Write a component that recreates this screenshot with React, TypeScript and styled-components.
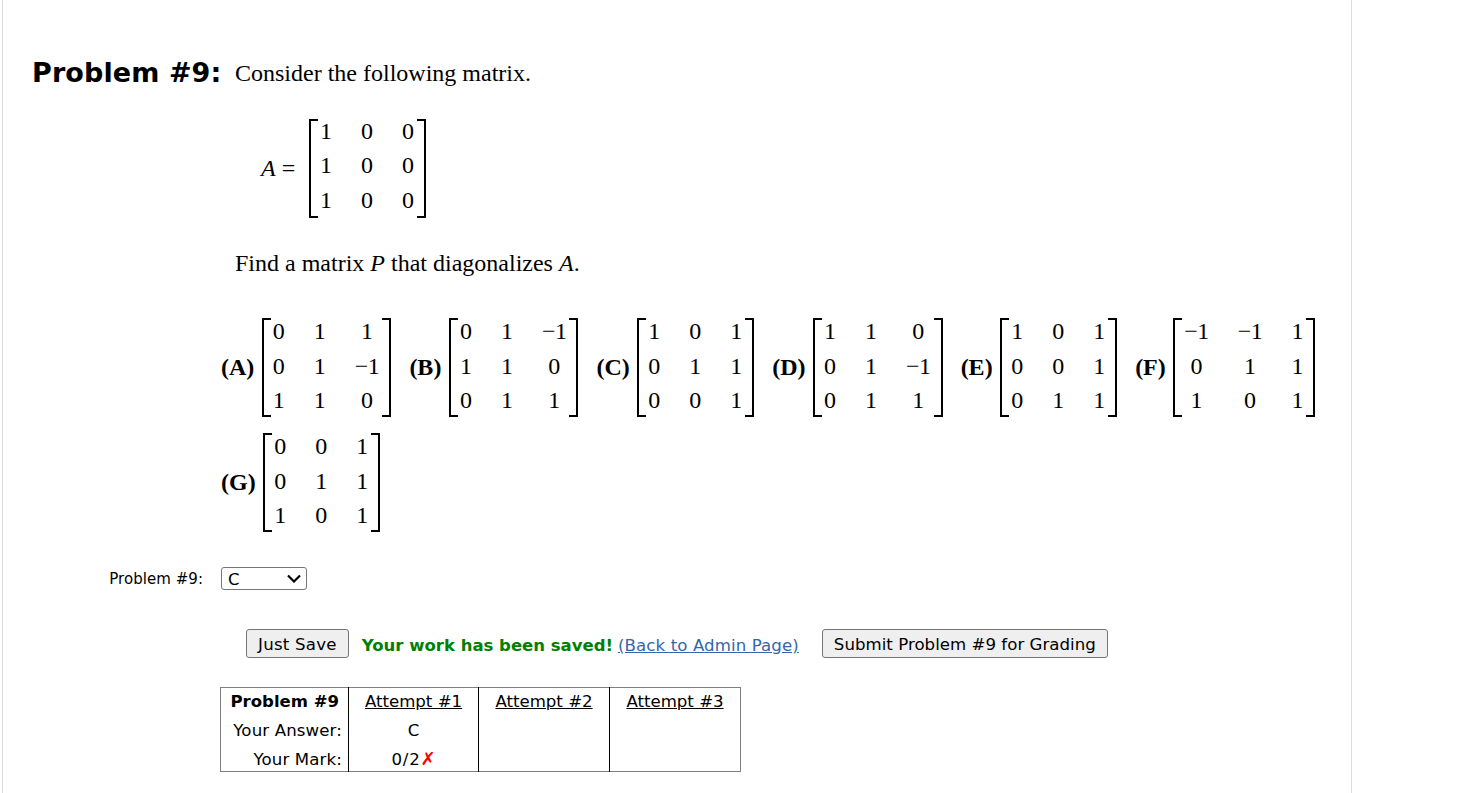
import React from "react";
import styled, { createGlobalStyle } from "styled-components";

const Global = createGlobalStyle`
  html, body { margin: 0; padding: 0; background: #fff; }
  body { font-family: "DejaVu Sans", Verdana, sans-serif; color: #000; overflow: hidden; }
`;

const Frame = styled.main`
  box-sizing: border-box;
  width: 1350px;
  height: 793px;
  margin-left: 2px;
  padding: 54px 0 0 30px;
  border-left: 1px solid #ddd;
  border-right: 1px solid #ddd;
  overflow: hidden;
`;

const HeadingRow = styled.div`
  display: flex;
  align-items: center;
`;

const Title = styled.h1`
  width: 203px;
  margin: 0 0 0 -1px;
  font-size: 27px;
  letter-spacing: 0.1px;
  line-height: 38px;
  font-weight: 700;
  white-space: nowrap;
`;

const Body = styled.section`
  margin-left: 188px;
  font-family: "Liberation Serif", "Times New Roman", serif;
  font-size: 24px;
`;

const Para = styled.p`
  margin: 0;
  font-family: "Liberation Serif", "Times New Roman", serif;
  font-size: 24px;
  line-height: 28px;
  white-space: nowrap;
`;

const Prompt = styled(Para)`
  margin: 31px 0 0 14px;
`;

const Equation = styled.div`
  display: flex;
  align-items: center;
  margin: 27px 0 0 40px;
`;

const Lhs = styled.span`
  width: 48px;
  white-space: nowrap;
`;

const Var = styled.i`
  font-style: italic;
`;

const Choices = styled.div`
  display: flex;
  flex-wrap: wrap;
  gap: 16px 18px;
  margin-top: 41px;
`;

const Choice = styled.div`
  display: flex;
  align-items: center;
  gap: 7.5px;
`;

const ChoiceLabel = styled.b`
  font-weight: 700;
  white-space: nowrap;
`;

const MatrixBox = styled.div`
  display: flex;
  align-items: stretch;
  height: 99px;
`;

const Bracket = styled.span<{ $side: "left" | "right" }>`
  box-sizing: border-box;
  width: 9px;
  border: 2px solid #000;
  border-${(p) => (p.$side === "left" ? "right" : "left")}: 0;
`;

const Cells = styled.div<{ $top: number }>`
  display: grid;
  grid-template-columns: repeat(3, auto);
  grid-auto-rows: 24px;
  column-gap: 29px;
  row-gap: 10.5px;
  margin-top: ${(p) => p.$top}px;
  padding: 0 3px 0 2px;
  line-height: 24px;
  text-align: center;
`;

const Cell = styled.span<{ $neg: boolean }>`
  white-space: nowrap;
  letter-spacing: ${(p) => (p.$neg ? "-0.5px" : "0")};
`;

const AnswerRow = styled.div`
  display: flex;
  align-items: center;
  margin-top: 35px;
`;

const AnswerLabel = styled.label`
  width: 170px;
  margin-right: 18px;
  font-size: 15px;
  letter-spacing: 0.05px;
  text-align: right;
  white-space: nowrap;
`;

const SelectWrap = styled.div`
  position: relative;
  width: 86px;
  height: 23px;
`;

const AnswerSelect = styled.select`
  appearance: none;
  box-sizing: border-box;
  width: 100%;
  height: 100%;
  padding: 1px 6px 0;
  font-family: "DejaVu Sans", Verdana, sans-serif;
  font-size: 16.6px;
  color: #000;
  background: #fff;
  border: 1px solid #767676;
  border-radius: 3px;
`;

const Chevron = styled.svg`
  position: absolute;
  top: 7px;
  right: 6px;
  width: 14px;
  height: 9px;
  pointer-events: none;
`;

const Actions = styled.div`
  display: flex;
  align-items: center;
  margin: 39px 0 0 213px;
  font-size: 16.6px;
  white-space: nowrap;
`;

const Button = styled.button<{ $track: number }>`
  box-sizing: border-box;
  height: 29px;
  padding: 2px 11px 0;
  font-family: "DejaVu Sans", Verdana, sans-serif;
  font-size: 16.6px;
  letter-spacing: ${(p) => p.$track}px;
  color: #000;
  background: #efefef;
  border: 1px solid #767676;
  border-radius: 3px;
  white-space: nowrap;
`;

const Saved = styled.b`
  margin-left: 13px;
  padding-top: 3px;
  color: #008000;
  font-size: 16.5px;
  font-weight: 700;
`;

const BackLink = styled.a`
  margin: 0 23px 0 5px;
  padding-top: 3px;
  color: #3366aa;
  letter-spacing: 0.1px;
  text-decoration: underline;
`;

const Attempts = styled.table`
  width: 521px;
  height: 85px;
  margin: 29px 0 0 187px;
  border-collapse: collapse;
  border: 1px solid #808080;
  font-size: 16.6px;
  table-layout: fixed;
  white-space: nowrap;
`;

const Row = styled.tr<{ $shift: number }>`
  height: 28px;
  && > * {
    padding-top: ${(p) => p.$shift}px;
  }
`;

const Th = styled.th<{ $w?: number }>`
  box-sizing: border-box;
  width: ${(p) => (p.$w ? `${p.$w}px` : "auto")};
  padding: 0;
  font-weight: 400;
  text-align: center;
  text-decoration: underline;
  border-left: 1px solid #000;
`;

const CornerTh = styled.th`
  box-sizing: border-box;
  width: 128px;
  padding: 0 9px 0 0;
  font-size: 16.5px;
  font-weight: 700;
  text-align: right;
`;

const RowHead = styled.th`
  padding: 0 6px 0 0;
  font-weight: 400;
  letter-spacing: 0.13px;
  text-align: right;
`;

const Td = styled.td`
  padding: 0;
  text-align: center;
  border-left: 1px solid #000;
`;

const Score = styled.span`
  letter-spacing: 0.8px;
`;

const Cross = styled.span`
  color: #ff0000;
  font-size: 18px;
  line-height: 1;
  font-weight: 700;
`;

type M = string[][];

const Matrix = ({ rows, top = 1 }: { rows: M; top?: number }) => (
  <MatrixBox>
    <Bracket $side="left" />
    <Cells $top={top}>
      {rows.flat().map((c, i) => (
        <Cell key={i} $neg={c.startsWith("−")}>
          {c}
        </Cell>
      ))}
    </Cells>
    <Bracket $side="right" />
  </MatrixBox>
);

const choices: [string, M][] = [
  ["(A)", [["0", "1", "1"], ["0", "1", "−1"], ["1", "1", "0"]]],
  ["(B)", [["0", "1", "−1"], ["1", "1", "0"], ["0", "1", "1"]]],
  ["(C)", [["1", "0", "1"], ["0", "1", "1"], ["0", "0", "1"]]],
  ["(D)", [["1", "1", "0"], ["0", "1", "−1"], ["0", "1", "1"]]],
  ["(E)", [["1", "0", "1"], ["0", "0", "1"], ["0", "1", "1"]]],
  ["(F)", [["−1", "−1", "1"], ["0", "1", "1"], ["1", "0", "1"]]],
  ["(G)", [["0", "0", "1"], ["0", "1", "1"], ["1", "0", "1"]]],
];

export default function App() {
  return (
    <>
      <Global />
      <Frame>
        <HeadingRow>
          <Title>Problem #9:</Title>
          <Para>Consider the following matrix.</Para>
        </HeadingRow>
        <Body>
          <Equation>
            <Lhs>
              <Var>A</Var> =
            </Lhs>
            <Matrix top={-0.5} rows={[["1", "0", "0"], ["1", "0", "0"], ["1", "0", "0"]]} />
          </Equation>
          <Prompt>
            Find a matrix <Var>P</Var> that diagonalizes <Var>A</Var>.
          </Prompt>
          <Choices>
            {choices.map(([label, rows]) => (
              <Choice key={label}>
                <ChoiceLabel>{label}</ChoiceLabel>
                <Matrix rows={rows} />
              </Choice>
            ))}
          </Choices>
        </Body>
        <AnswerRow>
          <AnswerLabel>Problem #9:</AnswerLabel>
          <SelectWrap>
            <AnswerSelect defaultValue="C">
              {["A", "B", "C", "D", "E", "F", "G"].map((o) => (
                <option key={o}>{o}</option>
              ))}
            </AnswerSelect>
            <Chevron viewBox="0 0 14 9" aria-hidden="true">
              <path d="M1 1.5 L7 7.5 L13 1.5" fill="none" stroke="#000" strokeWidth="2.2" />
            </Chevron>
          </SelectWrap>
        </AnswerRow>
        <Actions>
          <Button $track={0.25}>Just Save</Button>
          <Saved>Your work has been saved!</Saved>
          <BackLink href="#">(Back to Admin Page)</BackLink>
          <Button $track={0.03}>Submit Problem #9 for Grading</Button>
        </Actions>
        <Attempts>
          <thead>
            <Row $shift={0}>
              <CornerTh>Problem #9</CornerTh>
              <Th $w={130}>Attempt #1</Th>
              <Th $w={131}>Attempt #2</Th>
              <Th>Attempt #3</Th>
            </Row>
          </thead>
          <tbody>
            <Row $shift={1}>
              <RowHead>Your Answer:</RowHead>
              <Td>C</Td>
              <Td />
              <Td />
            </Row>
            <Row $shift={4}>
              <RowHead>Your Mark:</RowHead>
              <Td>
                <Score>0/2</Score>
                <Cross>✗</Cross>
              </Td>
              <Td />
              <Td />
            </Row>
          </tbody>
        </Attempts>
      </Frame>
    </>
  );
}
